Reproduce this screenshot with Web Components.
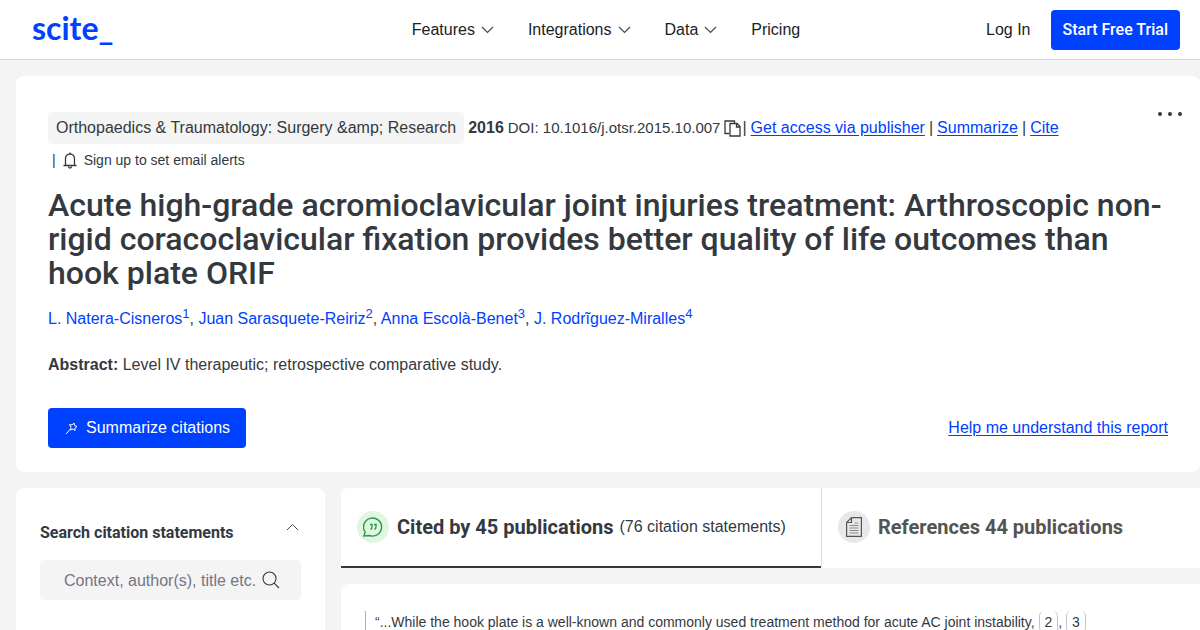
<!DOCTYPE html>
<html lang="en">
<head>
<meta charset="utf-8">
<meta name="viewport" content="width=device-width, initial-scale=1">
<title>scite_ report</title>
<style>
  html { overflow-x: hidden; }
  body {
    margin: 0;
    overflow-x: hidden;
    background: #f4f4f4;
    color: #33393f;
    font: 16px/20px "Liberation Sans", Arial, sans-serif;
    --blue: #0040ff;
    --strong: Roboto, "Liberation Sans", sans-serif;
  }
</style>
</head>
<body>
<scite-header></scite-header>
<scite-page>
  <report-card></report-card>
  <search-panel slot="side"></search-panel>
  <report-tabs slot="main"></report-tabs>
  <citation-statement slot="main"></citation-statement>
</scite-page>

<script>
const define = (name, html) => {
  const template = document.createElement('template');
  template.innerHTML = html;
  customElements.define(name, class extends HTMLElement {
    constructor() {
      super();
      this.attachShadow({ mode: 'open' }).append(template.content.cloneNode(true));
    }
  });
};

define('nav-item', `
<style>
  :host { display: block; }
  button { display: flex; align-items: center; gap: 6px; padding: 0; border: 0; background: none; color: #1d2125; font: inherit; cursor: pointer; }
</style>
<button type="button"><slot></slot>
  <svg width="13" height="8" viewBox="0 0 13 8" fill="none" stroke="#444a50" stroke-width="1.2"><path d="M1 1l5.5 5.5L12 1"/></svg>
</button>`);

define('scite-logo', `
<style>
  :host { display: block; padding-bottom: 4px; }
  a { display: block; color: var(--blue); font: 700 32px/32px Lato, sans-serif; text-decoration: none; }
</style>
<a href="#">scite_</a>`);

define('scite-header', `
<style>
  :host { display: grid; grid-template-columns: 1fr auto 1fr; align-items: center; height: 58px; padding: 1px 20px 0 32px; background: #fff; border-bottom: 1px solid #d8d8d8; color: #1d2125; }
  nav { display: flex; gap: 34px; align-items: center; }
  a { color: inherit; text-decoration: none; }
  .end { display: flex; justify-content: flex-end; align-items: center; gap: 20px; }
  .cta { padding: 10px 12px; border: 0; border-radius: 4px; background: var(--blue); color: #fff; font: 500 16px/20px var(--strong); cursor: pointer; }
</style>
<scite-logo></scite-logo>
<nav><nav-item>Features</nav-item><nav-item>Integrations</nav-item><nav-item>Data</nav-item><a href="#">Pricing</a></nav>
<div class="end"><a href="#">Log In</a><button class="cta" type="button">Start Free Trial</button></div>`);

define('scite-page', `
<style>
  :host { display: block; padding: 16px 0 0 16px; }
  .columns { display: grid; grid-template-columns: 309px minmax(0, 1fr); gap: 16px; margin-top: 16px; }
  .side, .main { display: flex; flex-direction: column; gap: 16px; }
</style>
<slot></slot>
<div class="columns">
  <div class="side"><slot name="side"></slot></div>
  <div class="main"><slot name="main"></slot></div>
</div>`);

define('report-meta', `
<style>
  :host { display: block; line-height: 32px; }
  .line { display: flex; flex-wrap: wrap; align-items: center; column-gap: 4px; }
  .journal { padding: 0 8px; border-radius: 4px; background: #f4f4f4; }
  .doi { font-size: 15px; }
  .copy { display: flex; align-items: center; gap: 1px; }
  .copy button { display: flex; align-items: center; padding: 0; border: 0; background: none; cursor: pointer; }
  a { color: var(--blue); text-decoration: underline; text-underline-offset: 2px; }
  .alerts { display: flex; align-items: center; font-size: 14px; padding-left: 4px; gap: 7px; }
  .alerts button { display: flex; align-items: center; gap: 7px; padding: 0; border: 0; background: none; color: inherit; font: inherit; cursor: pointer; }
</style>
<div class="line">
  <span class="journal">Orthopaedics &amp; Traumatology: Surgery &amp;amp; Research</span>
  <b>2016</b>
  <span class="doi">DOI: 10.1016/j.otsr.2015.10.007</span>
  <span class="copy"><button type="button" aria-label="Copy DOI"><svg width="17" height="17" viewBox="0 0 17 17" fill="none" stroke="#33393f" stroke-width="1.3"><path d="M5 13.500H1V1h9.500v2.500M6 3.500h7l3 3V16H6zM12.500 3.500V7H16"/></svg></button><span>|</span></span>
  <a href="#">Get access via publisher</a> <span>|</span>
  <a href="#">Summarize</a> <span>|</span>
  <a href="#">Cite</a>
  <span class="alerts"><span>|</span>
    <button type="button"><svg width="14" height="17" viewBox="0 0 14 17" fill="none" stroke="#33393f" stroke-width="1.3"><path d="M.5 13.500h13M2.500 13.500V6.500a4.500 4.500 0 0 1 9 0v7M7 2V.5M5.500 14.500a1.500 1.500 0 0 0 3 0"/></svg>Sign up to set email alerts</button>
  </span>
</div>`);

define('report-card', `
<style>
  :host { display: block; position: relative; padding: 36px 16px 24px 32px; border-radius: 8px; background: #fff; }
  .more { position: absolute; top: 34px; right: 16px; display: flex; padding: 0; border: 0; background: none; cursor: pointer; }
  report-meta { padding-right: 16px; }
  h1 { margin: 12px 0 18px; font: 500 32px/34px var(--strong); }
  p { margin: 0; line-height: 22px; }
  .authors a { color: var(--blue); text-decoration: none; }
  sup { font-size: 13px; line-height: 0; }
  .abstract { margin-top: 24px; }
  .actions { display: flex; justify-content: space-between; align-items: center; margin-top: 32px; padding-right: 16px; }
  .actions a { color: var(--blue); line-height: 22px; text-underline-offset: 2px; }
  .primary { display: flex; align-items: center; gap: 8px; padding: 10px 16px; border: 0; border-radius: 4px; background: var(--blue); color: #fff; font: inherit; cursor: pointer; }
</style>
<button class="more" type="button" aria-label="More options"><svg width="28" height="8" viewBox="0 0 28 8" fill="#33393f"><circle cx="4" cy="4" r="2"/><circle cx="14" cy="4" r="2"/><circle cx="24" cy="4" r="2"/></svg></button>
<report-meta></report-meta>
<h1>Acute high-grade acromioclavicular joint injuries treatment: Arthroscopic non-rigid coracoclavicular fixation provides better quality of life outcomes than hook plate ORIF</h1>
<p class="authors"><a href="#">L. Natera-Cisneros<sup>1</sup></a>, <a href="#">Juan Sarasquete-Reiriz<sup>2</sup></a>, <a href="#">Anna Escolà-Benet<sup>3</sup></a>, <a href="#">J. Rodrĩguez-Miralles<sup>4</sup></a></p>
<p class="abstract"><b>Abstract:</b> Level IV therapeutic; retrospective comparative study.</p>
<div class="actions">
  <button class="primary" type="button"><svg width="14" height="14" viewBox="0 0 14 14" fill="none" stroke="#fff"><path d="M2 13l4.500-5M5.500 3.500l2.500.500 2-2 .5 2.500 2.500 1-2 1.500v2.500L9 8l-2.500 1L7 6.500z"/></svg>Summarize citations</button>
  <a href="#">Help me understand this report</a>
</div>`);

define('search-panel', `
<style>
  :host { display: block; min-height: 180px; padding: 32px 24px; border-radius: 8px; background: #fff; }
  .head { display: flex; justify-content: space-between; }
  h2 { margin: 3px 0 0; font: 700 16px/20px var(--strong); }
  .toggle { display: flex; height: 8px; margin-top: 3px; padding: 0 2px; border: 0; background: none; cursor: pointer; }
  label { display: flex; align-items: center; height: 40px; margin-top: 17px; padding: 0 21px 0 24px; border-radius: 4px; background: #f4f4f4; }
  input { flex: 1; min-width: 0; padding: 1px 0 0; border: 0; outline: 0; background: none; color: inherit; font: inherit; }
  input::placeholder { color: #757585; opacity: 1; }
</style>
<div class="head"><h2>Search citation statements</h2>
<button class="toggle" type="button" aria-label="Collapse"><svg width="13" height="8" viewBox="0 0 13 8" fill="none" stroke="#444a50"><path d="M1 7l5.500-5.500L12 7"/></svg></button></div>
<label><input type="text" aria-label="Search citation statements" placeholder="Context, author(s), title etc."><svg width="18" height="18" viewBox="0 0 18 18" fill="none" stroke="#33393f" stroke-width="1.100"><circle cx="7.500" cy="7.500" r="6.500"/><path d="M12.200 12.200L17 17"/></svg></label>`);

define('report-tab', `
<style>
  :host { display: block; background: #fff; border-bottom: 2px solid transparent; color: #545454; }
  :host([active]) { border-bottom-color: #33393f; color: #33393f; }
  button { display: flex; align-items: center; gap: 8px; width: 100%; height: 78px; padding: 0 16px; border: 0; background: none; color: inherit; font: inherit; cursor: pointer; white-space: nowrap; }
  .icon { display: grid; place-items: center; width: 32px; height: 32px; border-radius: 50%; background: #e8e8e8; }
  :host([active]) .icon { background: #e0f5e2; }
  .title { font: 700 20px/24px var(--strong); }
  .label { display: flex; align-items: center; gap: 6px; }
</style>
<button type="button"><span class="icon"><slot name="icon"></slot></span><span class="label"><span class="title"><slot name="title"></slot></span><slot></slot></span></button>`);

define('report-tabs', `
<style>
  :host { display: grid; grid-template-columns: 480px minmax(0, 1fr); border-radius: 8px 0 0 0; overflow: hidden; background: #fff; }
  report-tab + report-tab { border-left: 1px solid #dedede; }
  svg { display: block; }
</style>
<report-tab active>
  <svg slot="icon" width="20" height="20" viewBox="0 0 20 20" fill="none" stroke="#2b9a45" stroke-width="1.4"><path d="M.8 19l1.400-3.800A9 9 0 1 1 6.500 18.500z"/><path d="M7 7.500h2v2q0 2-1.500 3M11 7.500h2v2q0 2-1.500 3"/></svg>
  <span slot="title">Cited by 45 publications</span><span>(76 citation statements)</span>
</report-tab>
<report-tab>
  <svg slot="icon" width="16" height="20" viewBox="0 0 16 20" fill="none" stroke="#545454" stroke-width="1.200"><path d="M5.500.6h9.900v18.800H.6V5.500zM5.500.6v4.900H.6"/><path stroke="#8a8a8a" d="M8.500 6H12M3.500 8.500h9M3.500 11h9M3.500 13.500h9M3.500 16h9"/></svg>
  <span slot="title">References 44 publications</span>
</report-tab>`);

define('ref-mark', `
<style>
  :host { display: inline-block; }
  a { display: block; padding: 0 5px; border: 1px solid #c4c4c4; border-width: 0 1px; border-radius: 5px; color: inherit; text-decoration: none; line-height: 22px; }
</style>
<a href="#"><slot></slot></a>`);

define('citation-statement', `
<style>
  :host { display: block; padding: 27px 24px 24px; border-radius: 8px 0 0 8px; background: #fff; }
  blockquote { margin: 0; padding-left: 9px; border-left: 1px solid #b0b0b0; font-size: 14px; line-height: 22px; }
</style>
<blockquote>“...While the hook plate is a well-known and commonly used treatment method for acute AC joint instability, <ref-mark>2</ref-mark>, <ref-mark>3</ref-mark></blockquote>`);
</script>
</body>
</html>
